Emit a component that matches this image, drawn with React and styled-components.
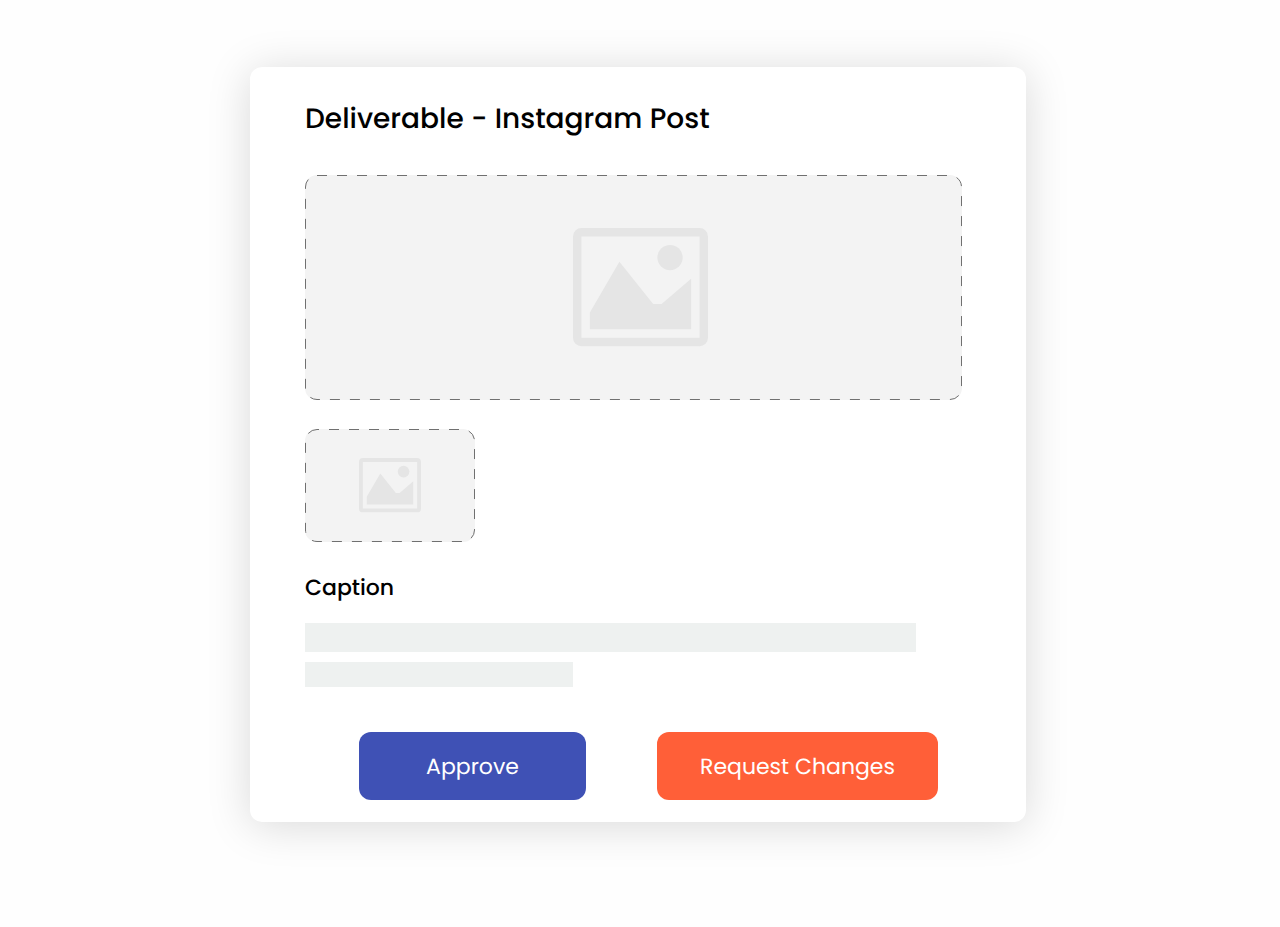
import styled, { createGlobalStyle } from 'styled-components'

const GlobalStyle = createGlobalStyle`
    * {
        box-sizing: border-box;
    }

    body {
        margin: 0;
        background: #fefefe;
        color: #000;
        font-family: Poppins, Inter, 'Liberation Sans', sans-serif;
        text-rendering: geometricPrecision;
    }
`
const Page = styled.main`
    display: flex;
    justify-content: center;
    padding: 67px 4px 105px 0;
`
const Card = styled.article`
    display: flex;
    flex-direction: column;
    width: 100%;
    max-width: 776px;
    padding: 32px 64px 22px 55px;
    border-radius: 12px;
    background: #fff;
    box-shadow: 0 4px 44px rgba(0, 0, 0, 0.15);
`
const Title = styled.h1`
    margin: 0 0 36px;
    font-size: 28px;
    font-weight: 500;
    line-height: 40px;
`
const Subtitle = styled.h2`
    margin: 30px 0 20px;
    font-size: 22px;
    font-weight: 500;
    line-height: 31px;
`
const PreviewList = styled.div`
    display: grid;
    gap: 29px;
`
const Preview = styled.div`
    position: relative;
    display: flex;
    align-items: center;
    justify-content: center;
    width: 100%;
    max-width: ${(props) => (props.$small ? '170px' : 'none')};
    height: ${(props) => (props.$small ? '113px' : '225px')};
    padding-left: ${(props) => (props.$small ? '0' : '14px')};
    border-radius: 12px;
    background: #f3f3f3;
`
const Outline = styled.svg`
    position: absolute;
    inset: 0;
    width: 100%;
    height: 100%;

    rect {
        width: calc(100% - 1px);
        height: calc(100% - 1px);
        fill: none;
        stroke: #707070;
        stroke-dasharray: 10 10;
    }
`
const Picture = styled.svg`
    width: ${(props) => (props.$small ? '62px' : '135px')};
    fill: #e5e5e5;
`
const Lines = styled.div`
    display: grid;
    gap: 10px;
`
const Line = styled.div`
    width: 100%;
    max-width: ${(props) => (props.$short ? '268px' : '611px')};
    height: ${(props) => (props.$short ? '25px' : '29px')};
    background: #eef1f0;
`
const Actions = styled.div`
    display: flex;
    flex-wrap: wrap;
    gap: 16px 71px;
    margin-top: 45px;
    padding-left: 54px;
`
const Button = styled.button`
    flex: 0 1 ${(props) => (props.$primary ? '227px' : '281px')};
    height: 68px;
    padding: 0;
    border: 0;
    border-radius: 12px;
    background: ${(props) => (props.$primary ? '#3f51b5' : '#ff5f38')};
    color: #fff;
    font: inherit;
    font-size: 22px;
    text-rendering: inherit;
    cursor: pointer;
`

const ImagePlaceholder = ({ small, label }) => (
    <Preview $small={small} role="img" aria-label={label}>
        <Outline aria-hidden="true">
            <rect x="0.5" y="0.5" rx="11.5" strokeDashoffset={small ? 8 : 0} />
        </Outline>
        <Picture $small={small} viewBox="0 0 16 14" aria-hidden="true">
            <path
                fillRule="evenodd"
                d="M1 0h14a1 1 0 0 1 1 1v12a1 1 0 0 1-1 1H1a1 1 0 0 1-1-1V1a1 1 0 0 1 1-1zM1 1v12h14V1z"
            />
            <path d="M2 10l3.5-6 4 5h1L14 6v6H2z" />
            <circle cx="11.5" cy="3.5" r="1.5" />
        </Picture>
    </Preview>
)

export default function App() {
    return (
        <>
            <GlobalStyle />
            <Page>
                <Card>
                    <Title>Deliverable - Instagram Post</Title>
                    <PreviewList>
                        <ImagePlaceholder label="Post image" />
                        <ImagePlaceholder label="Post thumbnail" small />
                    </PreviewList>
                    <Subtitle>Caption</Subtitle>
                    <Lines>
                        <Line />
                        <Line $short />
                    </Lines>
                    <Actions>
                        <Button type="button" $primary>
                            Approve
                        </Button>
                        <Button type="button">Request Changes</Button>
                    </Actions>
                </Card>
            </Page>
        </>
    )
}
